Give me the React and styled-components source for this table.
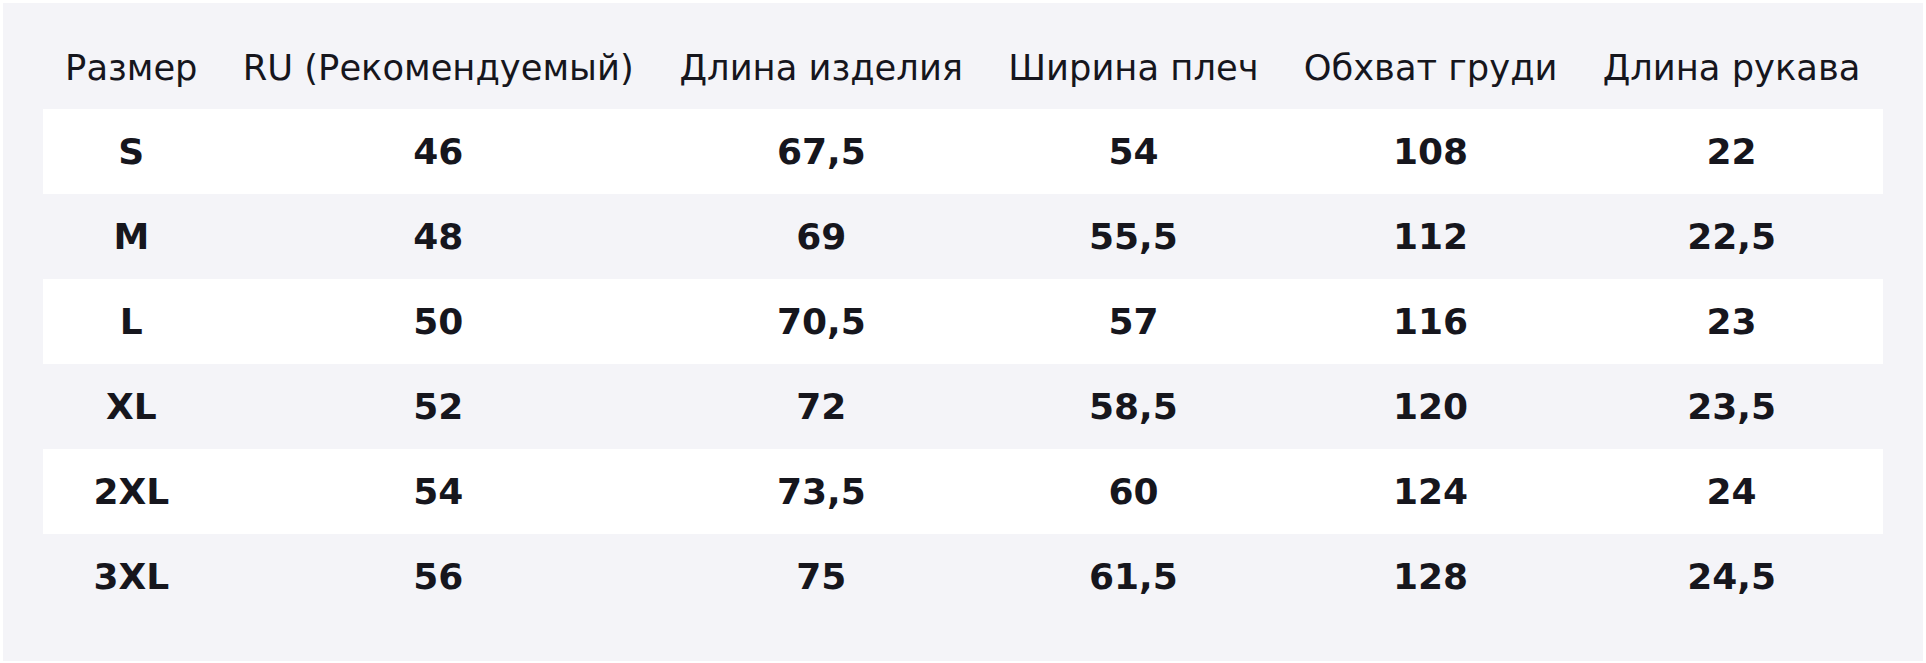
import React from "react";
import styled, { createGlobalStyle } from "styled-components";

const GlobalStyle = createGlobalStyle`
  body {
    margin: 0;
    background: #ffffff;
    font-family: "DejaVu Sans", "Noto Sans", sans-serif;
  }
`;

const Page = styled.div`
  padding: 3px;
`;

const Panel = styled.div`
  background: #f4f4f8;
  padding: 40px 40px 42px;
`;

const Table = styled.table`
  width: 100%;
  border-collapse: collapse;
  color: #16161d;
  font-size: 36px;
`;

const Th = styled.th`
  font-size: 35.3px;
  font-weight: 400;
  white-space: nowrap;
  padding: 4px 21.4px 21px;
  text-align: center;
`;

const Row = styled.tr`
  background: ${(props) => (props.$light ? "#ffffff" : "transparent")};
`;

const Td = styled.td`
  font-weight: 700;
  padding: 22px 21.4px;
  text-align: center;
  white-space: nowrap;
`;

const Headers = [
  "Размер",
  "RU (Рекомендуемый)",
  "Длина изделия",
  "Ширина плеч",
  "Обхват груди",
  "Длина рукава",
];

const Filas = [
  ["S", "46", "67,5", "54", "108", "22"],
  ["M", "48", "69", "55,5", "112", "22,5"],
  ["L", "50", "70,5", "57", "116", "23"],
  ["XL", "52", "72", "58,5", "120", "23,5"],
  ["2XL", "54", "73,5", "60", "124", "24"],
  ["3XL", "56", "75", "61,5", "128", "24,5"],
];

export default function App() {
  return (
    <>
      <GlobalStyle />
      <Page>
        <Panel>
          <Table>
            <thead>
              <tr>
                {Headers.map((h) => (
                  <Th key={h}>{h}</Th>
                ))}
              </tr>
            </thead>
            <tbody>
              {Filas.map((fila, i) => (
                <Row key={fila[0]} $light={i % 2 === 0}>
                  {fila.map((v, j) => (
                    <Td key={j}>{v}</Td>
                  ))}
                </Row>
              ))}
            </tbody>
          </Table>
        </Panel>
      </Page>
    </>
  );
}
